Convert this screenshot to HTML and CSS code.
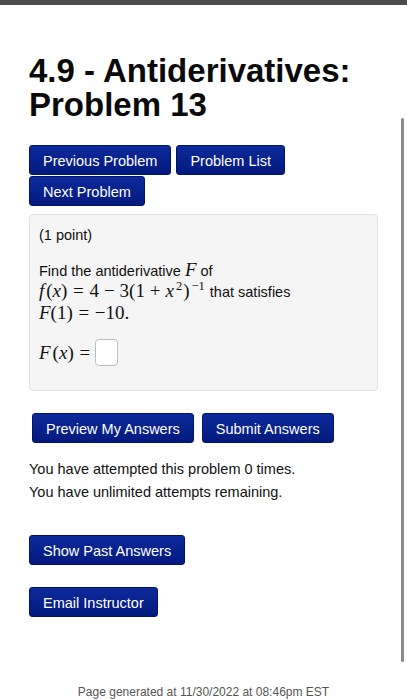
FILE: index.html
```html
<!DOCTYPE html>
<html>
<head>
<meta charset="utf-8">
<link rel="stylesheet" href="styles.css">
</head>
<body>
<div class="topbar"></div>
<div class="page">
  <h1 class="title">4.9 - Antiderivatives: Problem 13</h1>
  <div class="nav">
    <a class="btn">Previous Problem</a>
    <a class="btn">Problem List</a>
    <a class="btn">Next Problem</a>
  </div>
  <div class="well">
    <p class="points">(1 point)</p>
    <p class="problem">Find the antiderivative <span class="m i">F</span> of<br>
      <span class="m"><span class="i fi">f</span>(<span class="i">x</span>)<span class="rel">=</span>4<span class="bin">−</span>3(1<span class="bin">+</span><span class="i">x</span><sup>2</sup>)<sup>−1</sup></span> that satisfies<br>
      <span class="m"><span class="i">F</span>(1)<span class="rel">=</span>−10.</span></p>
    <p class="answer"><span class="m"><span class="i fi">F</span>(<span class="i">x</span>)<span class="rel">=</span></span><span class="input"></span></p>
  </div>
  <div class="submit">
    <a class="btn">Preview My Answers</a>
    <a class="btn">Submit Answers</a>
  </div>
  <p class="attempts">You have attempted this problem 0 times.<br>You have unlimited attempts remaining.</p>
  <div class="extra"><a class="btn">Show Past Answers</a></div>
  <div class="extra"><a class="btn">Email Instructor</a></div>
  <p class="footer">Page generated at 11/30/2022 at 08:46pm EST</p>
</div>
<div class="scrollbar"></div>
</body>
</html>
```
FILE: styles.css
```css
html, body {
  margin: 0;
  padding: 0;
  background: #fff;
  font-family: "Liberation Sans", Arial, sans-serif;
  color: #111;
  overflow: hidden;
  height: 700px;
}
.topbar {
  height: 5px;
  background: #4b4b4d;
}
.page {
  padding: 0 29px;
}
.title {
  margin: 49px 0 0;
  font-size: 33px;
  line-height: 34px;
  font-weight: bold;
  color: #0a0a0a;
}
.nav {
  margin-top: 23px;
  display: flex;
  flex-wrap: wrap;
  gap: 1px 5px;
  width: 270px;
}
.btn {
  display: inline-block;
  box-sizing: border-box;
  height: 30px;
  padding: 5px 13px;
  font-size: 14.5px;
  line-height: 20px;
  color: #fff;
  background: linear-gradient(#0d2a9a, #031a7e);
  border: 1px solid #021466;
  border-radius: 3px;
}
.well {
  margin-top: 8px;
  background: #f5f5f5;
  border: 1px solid #e2e2e2;
  border-radius: 4px;
  padding: 10px 9px 24px;
  font-size: 14.5px;
  line-height: 20.5px;
}
.well p {
  margin: 0;
}
.well .problem {
  margin-top: 14px;
}
.m {
  font-family: "Liberation Serif", "Times New Roman", serif;
  font-size: 19px;
  line-height: 1;
}
.i {
  font-style: italic;
}
.fi {
  margin-right: 2px;
}
.rel {
  margin: 0 0.3em;
}
.bin {
  margin: 0 0.26em;
}
.m sup {
  font-size: 12.5px;
  line-height: 0;
  vertical-align: 7px;
  margin-left: 2px;
  margin-right: 1px;
}
.well .answer {
  margin-top: 14px;
  display: flex;
  align-items: center;
  height: 28px;
}
.answer .rel {
  margin-right: 5px;
}
.input {
  display: inline-block;
  width: 21px;
  height: 25px;
  background: #fff;
  border: 1px solid #bdbdbd;
  border-radius: 4px;
}
.submit {
  margin-top: 22px;
  padding-left: 3px;
  display: flex;
  gap: 8px;
}
.attempts {
  margin: 15px 0 0;
  font-size: 14.5px;
  line-height: 23px;
}
.extra {
  margin-top: 31px;
}
.extra + .extra {
  margin-top: 22px;
}
.footer {
  margin: 68px 0 0;
  text-align: center;
  font-size: 12px;
  line-height: 14px;
  color: #555;
}
.scrollbar {
  position: absolute;
  left: 401px;
  top: 118px;
  width: 3px;
  height: 544px;
  border-radius: 2px;
  background: #8a8a8a;
}
```
